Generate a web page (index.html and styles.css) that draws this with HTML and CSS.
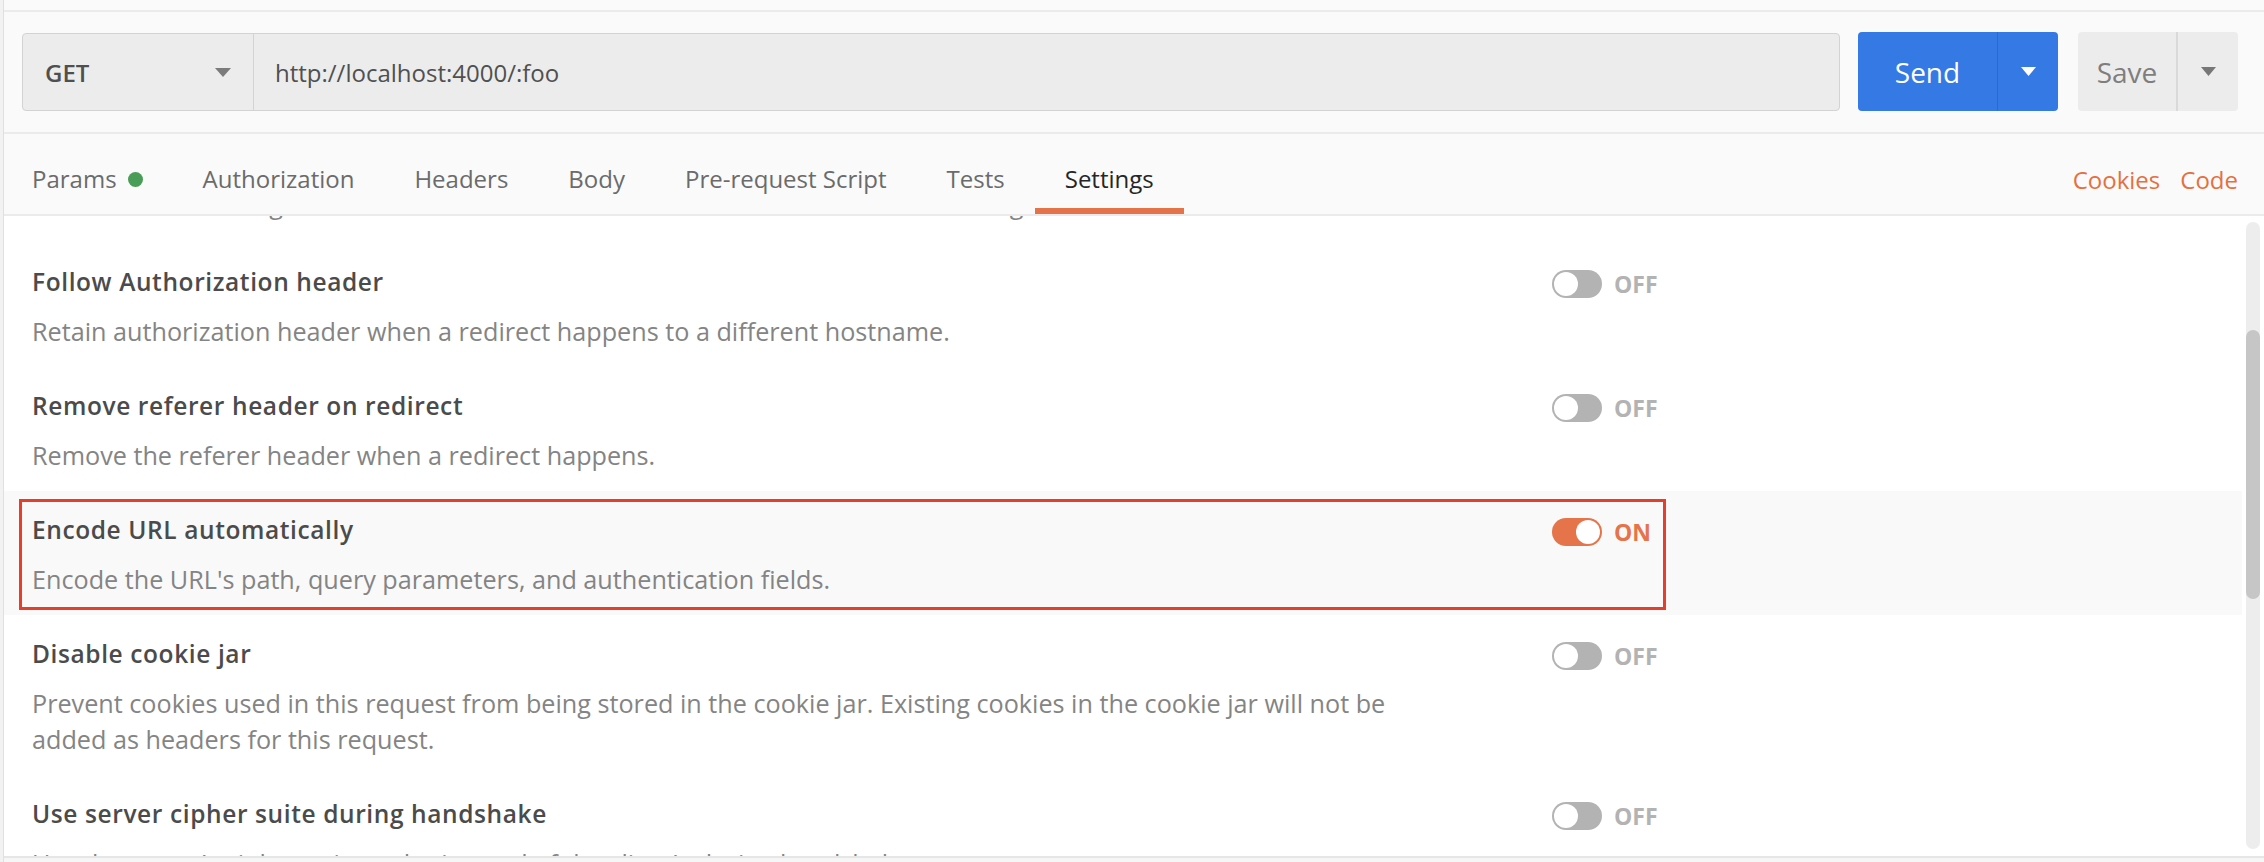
FILE: index.html
```html
<!DOCTYPE html>
<html>
<head>
<meta charset="utf-8">
<title>Request Settings</title>
<link rel="stylesheet" href="styles.css">
</head>
<body>
<div class="app">
  <div class="edge"></div>
  <div class="main">
    <div class="topstrip"></div>

    <div class="urlrow">
      <div class="urlgroup">
        <div class="method">
          <span class="method-name">GET</span>
          <svg class="caret" width="16" height="9" viewBox="0 0 16 9"><polygon points="0,0 16,0 8,9"/></svg>
        </div>
        <div class="url">http://localhost:4000/:foo</div>
      </div>
      <div class="btn send">
        <span class="btn-main">Send</span>
        <span class="btn-drop"><svg class="caret-w" width="15" height="9" viewBox="0 0 15 9"><polygon points="0,0 15,0 7.5,9"/></svg></span>
      </div>
      <div class="btn save">
        <span class="btn-main">Save</span>
        <span class="btn-drop"><svg class="caret-g" width="15" height="9" viewBox="0 0 15 9"><polygon points="0,0 15,0 7.5,9"/></svg></span>
      </div>
    </div>

    <div class="tabs">
      <div class="tab">Params<span class="dot"></span></div>
      <div class="tab">Authorization</div>
      <div class="tab">Headers</div>
      <div class="tab">Body</div>
      <div class="tab">Pre-request Script</div>
      <div class="tab">Tests</div>
      <div class="tab active">Settings</div>
      <div class="tab-links"><span>Cookies</span><span>Code</span></div>
    </div>

    <div class="content">
      <div class="list">
        <div class="list-inner">
          <div class="row clipped">
            <div class="row-inner">
              <div class="text">
                <div class="title">Follow original HTTP Method</div>
                <div class="desc">Redirect with the original HTTP method instead of the default behavior of redirecting with GET.</div>
              </div>
              <div class="toggle-col"><span class="switch"><span class="knob"></span></span><span class="state">OFF</span></div>
            </div>
          </div>
          <div class="row">
            <div class="row-inner">
              <div class="text">
                <div class="title">Follow Authorization header</div>
                <div class="desc">Retain authorization header when a redirect happens to a different hostname.</div>
              </div>
              <div class="toggle-col"><span class="switch"><span class="knob"></span></span><span class="state">OFF</span></div>
            </div>
          </div>
          <div class="row">
            <div class="row-inner">
              <div class="text">
                <div class="title">Remove referer header on redirect</div>
                <div class="desc">Remove the referer header when a redirect happens.</div>
              </div>
              <div class="toggle-col"><span class="switch"><span class="knob"></span></span><span class="state">OFF</span></div>
            </div>
          </div>
          <div class="row hover">
            <div class="row-inner marked">
              <div class="text">
                <div class="title">Encode URL automatically</div>
                <div class="desc">Encode the URL's path, query parameters, and authentication fields.</div>
              </div>
              <div class="toggle-col"><span class="switch on"><span class="knob"></span></span><span class="state on">ON</span></div>
            </div>
          </div>
          <div class="row">
            <div class="row-inner">
              <div class="text">
                <div class="title">Disable cookie jar</div>
                <div class="desc">Prevent cookies used in this request from being stored in the cookie jar. Existing cookies in the cookie jar will not be added as headers for this request.</div>
              </div>
              <div class="toggle-col"><span class="switch"><span class="knob"></span></span><span class="state">OFF</span></div>
            </div>
          </div>
          <div class="row">
            <div class="row-inner">
              <div class="text">
                <div class="title">Use server cipher suite during handshake</div>
                <div class="desc">Use the server's cipher suite order instead of the client's during handshake.</div>
              </div>
              <div class="toggle-col"><span class="switch"><span class="knob"></span></span><span class="state">OFF</span></div>
            </div>
          </div>
        </div>
      </div>
      <div class="scrollbar"><div class="thumb"></div></div>
    </div>

    <div class="footer"></div>
  </div>
</div>
</body>
</html>
```

FILE: styles.css
```css
html, body {
  margin: 0;
  padding: 0;
}

body {
  width: 2264px;
  height: 862px;
  overflow: hidden;
  background: #fafafa;
  font-family: "Open Sans", "DejaVu Sans", sans-serif;
}

.app {
  display: flex;
  height: 862px;
}

.edge {
  flex: none;
  width: 3px;
  background: #f2f2f2;
  border-right: 1px solid #e0e0e0;
}

.main {
  flex: 1;
  min-width: 0;
  display: flex;
  flex-direction: column;
}

.topstrip {
  flex: none;
  height: 10px;
  border-bottom: 2px solid #ebebeb;
}

/* URL row */
.urlrow {
  flex: none;
  height: 78px;
  padding: 21px 26px 21px 18px;
  display: flex;
  border-bottom: 2px solid #ebebeb;
}

.urlgroup {
  flex: 1;
  min-width: 0;
  height: 78px;
  box-sizing: border-box;
  display: flex;
  background: #ececec;
  border: 1px solid #d3d3d3;
  border-radius: 4px;
}

.method {
  flex: none;
  width: 231px;
  box-sizing: border-box;
  display: flex;
  align-items: center;
  justify-content: space-between;
  padding: 0 22px 0 22px;
  border-right: 1px solid #d3d3d3;
}

.method-name {
  font-size: 24px;
  font-weight: 600;
  color: #4f4f4f;
}

.caret {
  fill: #7b7b7b;
}

.url {
  display: flex;
  align-items: center;
  padding-left: 21px;
  font-size: 24px;
  color: #505050;
}

.btn {
  flex: none;
  display: flex;
  height: 79px;
  margin-top: -1px;
  border-radius: 4px;
  overflow: hidden;
}

.send {
  width: 200px;
  margin-left: 18px;
  background: #3579e4;
}

.save {
  width: 160px;
  margin-left: 20px;
  background: #ececec;
}

.btn-main {
  display: flex;
  align-items: center;
  justify-content: center;
  font-size: 28px;
  box-sizing: border-box;
}

.send .btn-main {
  width: 140px;
  color: #ffffff;
  border-right: 1px solid #2b6bd1;
}

.save .btn-main {
  width: 100px;
  color: #7e7e7e;
  border-right: 2px solid #d9d9d9;
}

.btn-drop {
  flex: 1;
  display: flex;
  align-items: center;
  justify-content: center;
}

.caret-w {
  fill: #ffffff;
}

.caret-g {
  fill: #777777;
}

/* Tabs */
.tabs {
  flex: none;
  height: 80px;
  display: flex;
  border-bottom: 2px solid #ebebeb;
}

.tab {
  display: flex;
  align-items: center;
  box-sizing: border-box;
  padding: 10px 30px 0;
  font-size: 24px;
  line-height: 36px;
  color: #6b6b6b;
  white-space: nowrap;
}

.tab:first-child {
  padding-left: 28px;
}

.tab.active {
  color: #262626;
  box-shadow: inset 0 -6px 0 #e5734a;
}

.dot {
  width: 15px;
  height: 15px;
  border-radius: 50%;
  background: #4a9d57;
  margin-left: 11px;
}

.tab-links {
  margin-left: auto;
  display: flex;
  align-items: center;
  gap: 20px;
  padding: 10px 26px 0 0;
  font-size: 24px;
  color: #e4703f;
}

/* Content */
.content {
  flex: none;
  height: 640px;
  display: flex;
  background: #ffffff;
  overflow: hidden;
}

.list {
  flex: 1;
  min-width: 0;
  overflow: hidden;
}

.list-inner {
  margin-top: -97px;
}

.row {
  padding: 21px 0 18px 28px;
}

.row.hover {
  background: #f9f9f9;
}

.row.clipped .desc {
  margin-top: 10px;
}

.row.clipped {
  padding-bottom: 21px;
}

.row-inner {
  display: flex;
  width: 1621px;
}

.row-inner.marked {
  outline: 3px solid #e3402b;
  outline-offset: 10px;
}

.text {
  width: 1400px;
}

.title {
  font-size: 24.5px;
  line-height: 36px;
  font-weight: 600;
  letter-spacing: 0.6px;
  color: #4b4b4b;
}

.desc {
  margin-top: 13px;
  font-size: 25.2px;
  line-height: 36px;
  color: #848484;
}

.toggle-col {
  margin-left: auto;
  flex: none;
  width: 101px;
  height: 28px;
  margin-top: 6px;
  display: flex;
  align-items: center;
  gap: 12px;
  white-space: nowrap;
}

.switch {
  flex: none;
  width: 50px;
  height: 28px;
  box-sizing: border-box;
  padding: 2px;
  border-radius: 14px;
  background: #b3b3b3;
  display: flex;
  justify-content: flex-start;
}

.switch.on {
  background: #e5744b;
  justify-content: flex-end;
}

.knob {
  width: 24px;
  height: 24px;
  border-radius: 50%;
  background: #ffffff;
}

.state {
  font-size: 23px;
  line-height: 28px;
  font-weight: 700;
  color: #b3b3b3;
}

.state.on {
  color: #e5744b;
}

/* Scrollbar */
.scrollbar {
  flex: none;
  width: 14px;
  margin: 6px 4px 7px 4px;
  background: #ededed;
  border-radius: 7px;
}

.thumb {
  margin-top: 108px;
  height: 269px;
  background: #c6c6c6;
  border-radius: 7px;
}

.footer {
  flex: 1;
  border-top: 2px solid #e6e6e6;
  background: #f6f6f6;
}
```
